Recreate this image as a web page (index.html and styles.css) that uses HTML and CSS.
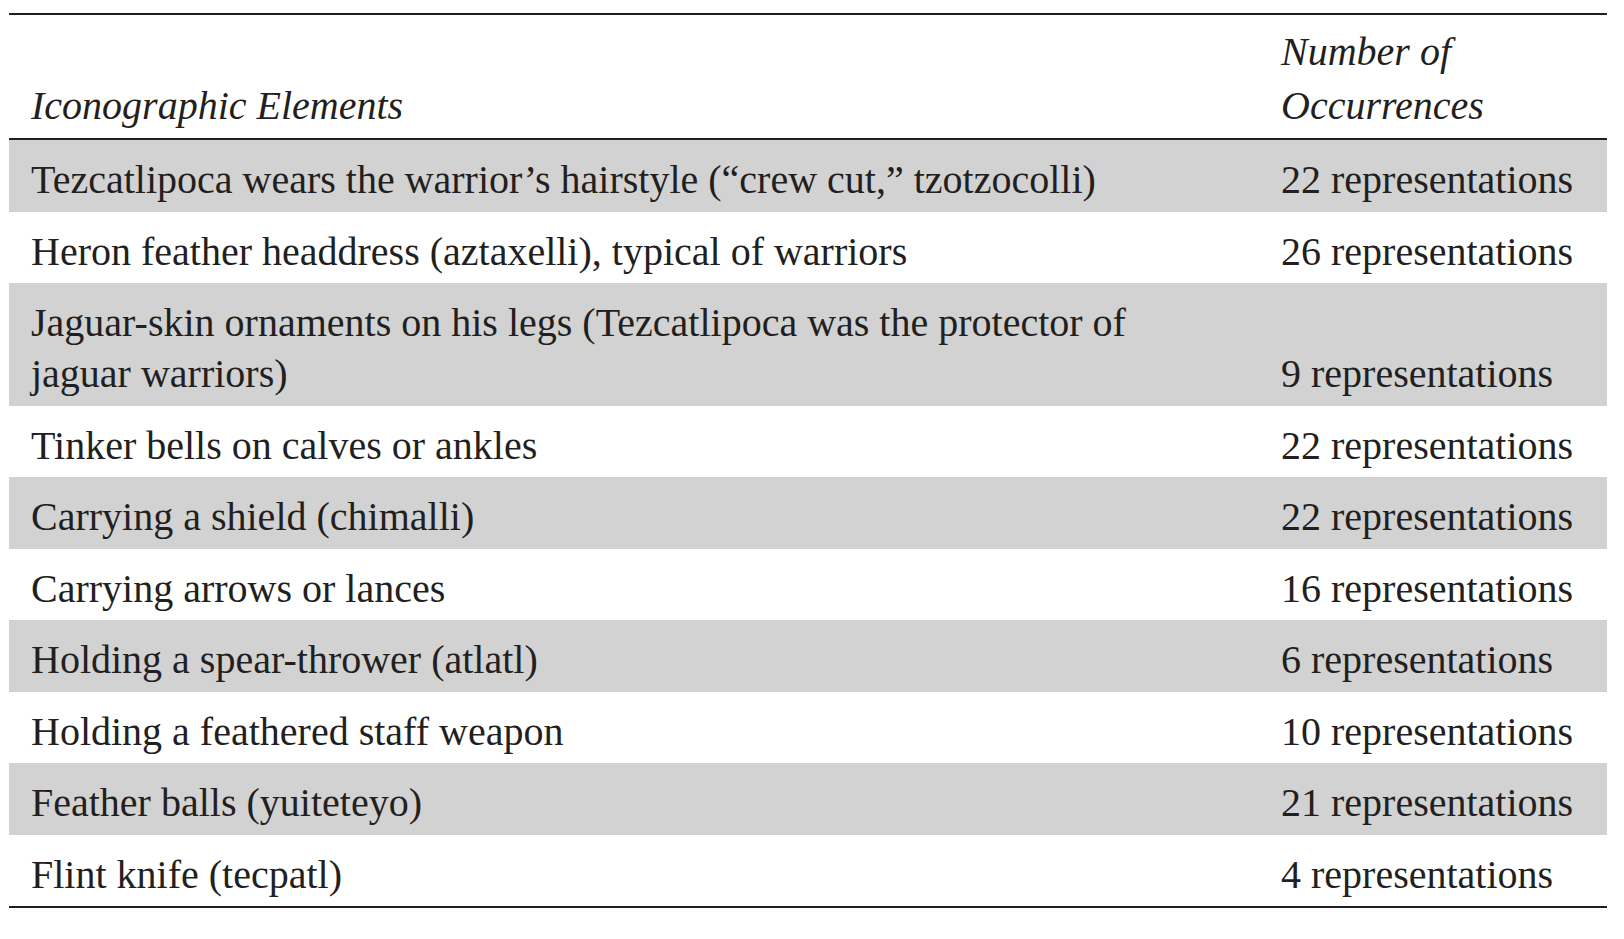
FILE: index.html
```html
<!DOCTYPE html>
<html lang="en">
<head>
<meta charset="utf-8">
<title>Iconographic Elements</title>
<link rel="stylesheet" href="styles.css">
</head>
<body>
<table class="occ">
  <thead>
    <tr>
      <th class="c1">Iconographic Elements</th>
      <th class="c2">Number of<br>Occurrences</th>
    </tr>
  </thead>
  <tbody>
    <tr class="shade"><td>Tezcatlipoca wears the warrior’s hairstyle (“crew cut,” tzotzocolli)</td><td>22 representations</td></tr>
    <tr><td>Heron feather headdress (aztaxelli), typical of warriors</td><td>26 representations</td></tr>
    <tr class="shade"><td>Jaguar-skin ornaments on his legs (Tezcatlipoca was the protector of<br>jaguar warriors)</td><td>9 representations</td></tr>
    <tr><td>Tinker bells on calves or ankles</td><td>22 representations</td></tr>
    <tr class="shade"><td>Carrying a shield (chimalli)</td><td>22 representations</td></tr>
    <tr><td>Carrying arrows or lances</td><td>16 representations</td></tr>
    <tr class="shade"><td>Holding a spear-thrower (atlatl)</td><td>6 representations</td></tr>
    <tr><td>Holding a feathered staff weapon</td><td>10 representations</td></tr>
    <tr class="shade"><td>Feather balls (yuiteteyo)</td><td>21 representations</td></tr>
    <tr><td>Flint knife (tecpatl)</td><td>4 representations</td></tr>
  </tbody>
</table>
</body>
</html>
```
FILE: styles.css
```css
html, body {
  margin: 0;
  padding: 0;
  background: #ffffff;
}
body {
  font-family: "Liberation Serif", "Times New Roman", serif;
  color: #231f20;
}
.occ {
  border-collapse: collapse;
  width: 1598px;
  margin: 13px 0 0 9px;
  border-top: 2px solid #231f20;
  border-bottom: 2px solid #231f20;
  font-size: 40px;
}
.occ th {
  font-style: italic;
  font-weight: normal;
  text-align: left;
  vertical-align: bottom;
  line-height: 54px;
  padding: 10px 22px 5px;
  border-bottom: 2px solid #231f20;
}
.occ .c1 {
  width: 1206px;
}
.occ td {
  line-height: 51px;
  vertical-align: bottom;
  padding: 14px 22px 6.5px;
  white-space: nowrap;
}
.occ tr.shade td {
  background: #d2d2d2;
}
```
